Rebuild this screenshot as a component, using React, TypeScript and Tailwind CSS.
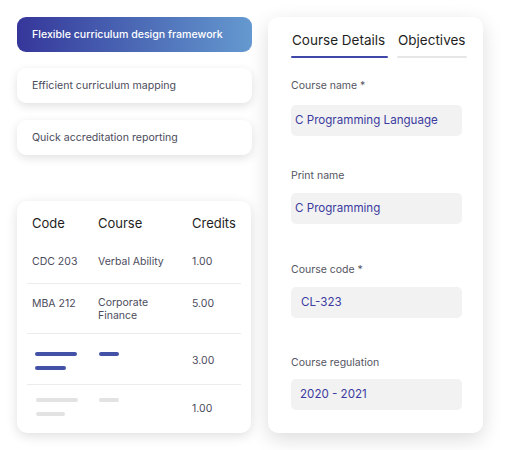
import React from 'react';

const font = { fontFamily: 'Inter, "Noto Sans", sans-serif' };

const FeatureCard: React.FC<{ label: string; active?: boolean }> = ({ label, active }) => (
  <div
    className={
      active
        ? 'h-[35px] flex items-center px-[15px] rounded-[9px] bg-gradient-to-r from-[#36369a] to-[#6599cf] text-white text-[10.6px] font-medium'
        : 'h-[35px] flex items-center px-[15px] rounded-[9px] bg-white text-[#4b4b5c] text-[10.6px] shadow-[0_3px_10px_rgba(0,0,0,0.12)]'
    }
  >
    {label}
  </div>
);

const Field: React.FC<{ label: string; value: string; top: string; gap: string; inset: string }> = ({
  label,
  value,
  top,
  gap,
  inset,
}) => (
  <div className={top}>
    <div className="text-[10.5px] leading-[14px] text-[#55555f]">{label}</div>
    <div
      className={`${gap} h-[31px] w-[171px] rounded-[5px] bg-[#f2f2f2] flex items-center text-[11.6px] text-[#3b3ba0] ${inset}`}
    >
      {value}
    </div>
  </div>
);

const Bar: React.FC<{ w: string; tone: string }> = ({ w, tone }) => (
  <div className={`h-[4px] rounded-full ${w} ${tone}`} />
);

export default function App() {
  return (
    <div className="w-[508px] h-[450px] bg-white flex gap-[16px] pl-[17px] pt-[17px]" style={font}>
      <div className="w-[235px] flex flex-col">
        <FeatureCard label="Flexible curriculum design framework" active />
        <div className="mt-[16px]">
          <FeatureCard label="Efficient curriculum mapping" />
        </div>
        <div className="mt-[17px]">
          <FeatureCard label="Quick accreditation reporting" />
        </div>

        <div className="mt-[46px] h-[232px] w-[234px] rounded-[10px] bg-white shadow-[0_3px_12px_rgba(0,0,0,0.13)] px-[10px]">
          <div className="flex h-[42px] pt-[13px] text-[13px] leading-[18px] text-[#1f1f1f] px-[5px]">
            <div className="w-[66px]">Code</div>
            <div className="w-[94px]">Course</div>
            <div>Credits</div>
          </div>
          <div className="flex h-[41px] pt-[12px] text-[10.5px] leading-[13px] text-[#4b4b5c] px-[5px] border-b border-[#ececec]">
            <div className="w-[66px]">CDC 203</div>
            <div className="w-[94px]">Verbal Ability</div>
            <div>1.00</div>
          </div>
          <div className="flex h-[50px] pt-[12px] text-[10.5px] leading-[13px] text-[#4b4b5c] px-[5px] border-b border-[#ececec]">
            <div className="w-[66px] pt-[1px]">MBA 212</div>
            <div className="w-[94px]">
              Corporate
              <br />
              Finance
            </div>
            <div className="pt-[1px]">5.00</div>
          </div>
          <div className="flex h-[51px] text-[10.5px] leading-[13px] text-[#4b4b5c] px-[5px] border-b border-[#ececec]">
            <div className="w-[66px] pt-[18px] pl-[3px] flex flex-col gap-[10px]">
              <Bar w="w-[42px]" tone="bg-[#4352a6]" />
              <Bar w="w-[31px]" tone="bg-[#4352a6]" />
            </div>
            <div className="w-[94px] pt-[18px] pl-[1px]">
              <Bar w="w-[20px]" tone="bg-[#4352a6]" />
            </div>
            <div className="pt-[20px]">3.00</div>
          </div>
          <div className="flex h-[46px] text-[10.5px] leading-[13px] text-[#4b4b5c] px-[5px]">
            <div className="w-[66px] pt-[13px] pl-[4px] flex flex-col gap-[10px]">
              <Bar w="w-[42px]" tone="bg-[#e3e3e3]" />
              <Bar w="w-[29px]" tone="bg-[#e3e3e3]" />
            </div>
            <div className="w-[94px] pt-[13px] pl-[1px]">
              <Bar w="w-[20px]" tone="bg-[#e3e3e3]" />
            </div>
            <div className="pt-[17px]">1.00</div>
          </div>
        </div>
      </div>

      <div className="w-[215px] h-[416px] rounded-[10px] bg-white shadow-[0_6px_20px_rgba(0,0,0,0.14)] pl-[23px] pt-[14px]">
        <div className="flex gap-[9px] text-[13.5px] leading-[18px] text-[#1f1f1f]">
          <div className="w-[97px]">
            <div className="pl-[1px]">Course Details</div>
            <div className="mt-[7px] h-[2px] rounded-full bg-[#3f48a8]" />
          </div>
          <div className="w-[70px]">
            <div className="pl-[1px]">Objectives</div>
            <div className="mt-[7px] h-[2px] rounded-full bg-[#e6e6e6]" />
          </div>
        </div>
        <Field top="mt-[21px]" gap="mt-[12px]" label="Course name *" value="C Programming Language" inset="pl-[4px]" />
        <Field top="mt-[33px]" gap="mt-[10px]" label="Print name" value="C Programming" inset="pl-[4px]" />
        <Field top="mt-[39px]" gap="mt-[10px]" label="Course code *" value="CL-323" inset="pl-[10px]" />
        <Field top="mt-[38px]" gap="mt-[9px]" label="Course regulation" value="2020 - 2021" inset="pl-[9px]" />
      </div>
    </div>
  );
}
